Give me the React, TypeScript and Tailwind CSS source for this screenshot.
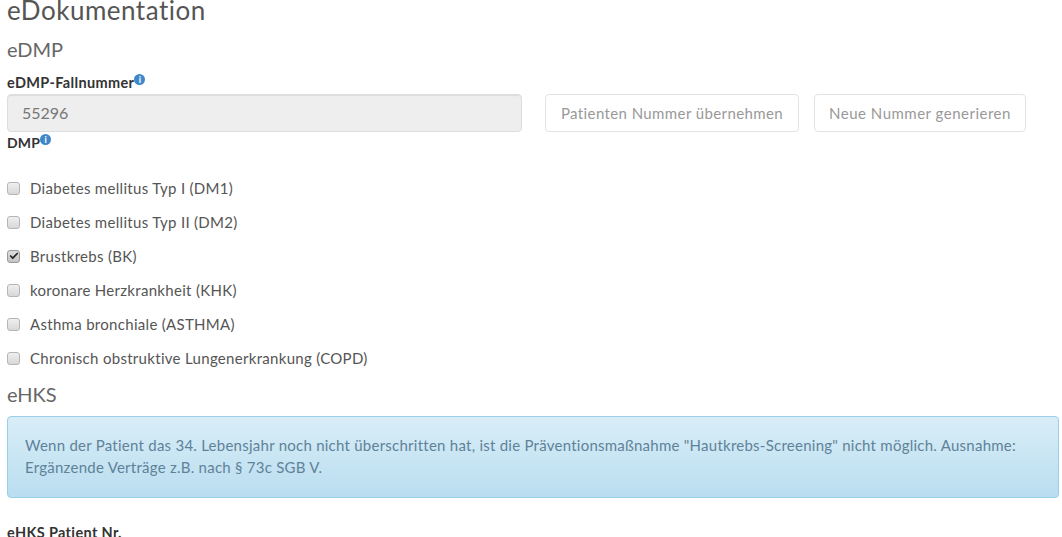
import { Check } from 'lucide-react';

const dmps = [
  { label: 'Diabetes mellitus Typ I (DM1)' },
  { label: 'Diabetes mellitus Typ II (DM2)' },
  { label: 'Brustkrebs (BK)', checked: true },
  { label: 'koronare Herzkrankheit (KHK)' },
  { label: 'Asthma bronchiale (ASTHMA)' },
  { label: 'Chronisch obstruktive Lungenerkrankung (COPD)' },
];

function InfoBadge() {
  return (
    <span className="mb-[7px] flex h-[11px] w-[11px] items-center justify-center rounded-full bg-[#3f87c9] text-[9px] leading-none font-bold tracking-normal text-white">
      i
    </span>
  );
}

export default function App() {
  return (
    <div className="h-[537px] w-[1062px] overflow-hidden bg-white pl-[7px] font-['Lato',sans-serif] text-[#555]">
      <h1 className="h-[22px] text-[26px] leading-[20px] tracking-[0.5px] text-[#555]">eDokumentation</h1>
      <h2 className="mt-[16px] h-[22px] text-[20px] leading-[22px] text-[#666]">eDMP</h2>

      <div className="mt-[13px] flex h-[19px] items-center text-[14.5px] font-bold tracking-[0.35px] text-[#333]">
        eDMP-Fallnummer
        <InfoBadge />
      </div>
      <div className="mt-[2px] flex h-[38px] items-stretch">
        <div className="flex w-[515px] items-center rounded-[4px] border border-[#ddd] bg-[#eee] pb-[1px] pl-[14px] text-[16px] text-[#777] shadow-[inset_0_1px_1px_rgba(0,0,0,0.075)]">
          55296
        </div>
        <button className="ml-[23px] w-[254px] rounded-[4px] border border-[#e3e3e3] bg-white text-[15px] tracking-[0.4px] text-[#999]">
          Patienten Nummer übernehmen
        </button>
        <button className="ml-[15px] w-[212px] rounded-[4px] border border-[#e3e3e3] bg-white text-[15px] tracking-[0.5px] text-[#999]">
          Neue Nummer generieren
        </button>
      </div>

      <div className="mt-[1px] flex h-[19px] items-center text-[14px] font-bold tracking-[0.2px] text-[#333]">
        DMP
        <InfoBadge />
      </div>

      <div className="mt-[26px] flex flex-col gap-[14px]">
        {dmps.map((d) => (
          <label key={d.label} className="flex h-[20px] items-center text-[15px] tracking-[0.3px] text-[#555]">
            <span
              className={
                d.checked
                  ? 'flex h-[13px] w-[13px] items-center justify-center rounded-[3px] border border-[#999] bg-gradient-to-b from-[#ddd] to-[#c4c4c4]'
                  : 'flex h-[13px] w-[13px] items-center justify-center rounded-[3px] border border-[#b5b5b5] bg-gradient-to-b from-[#efefef] to-[#d8d8d8]'
              }
            >
              {d.checked && <Check size={10} strokeWidth={4} className="text-[#222]" />}
            </span>
            <span className="ml-[10px]">{d.label}</span>
          </label>
        ))}
      </div>

      <h2 className="mt-[15px] h-[22px] text-[20px] leading-[22px] text-[#666]">eHKS</h2>

      <div className="mt-[11px] h-[82px] w-[1052px] rounded-[4px] border border-[#9acfea] bg-gradient-to-b from-[#d9edf7] to-[#b9def0] pr-[10px] pl-[17px] pt-[17px] text-[15px] leading-[22px] tracking-[0.25px] text-[#5f8299]">
        Wenn der Patient das 34. Lebensjahr noch nicht überschritten hat, ist die Präventionsmaßnahme "Hautkrebs-Screening" nicht möglich. Ausnahme: Ergänzende Verträge z.B. nach § 73c SGB V.
      </div>

      <div className="mt-[25px] text-[14.5px] leading-[19px] font-bold tracking-[0.35px] text-[#333]">eHKS Patient Nr.</div>
    </div>
  );
}
